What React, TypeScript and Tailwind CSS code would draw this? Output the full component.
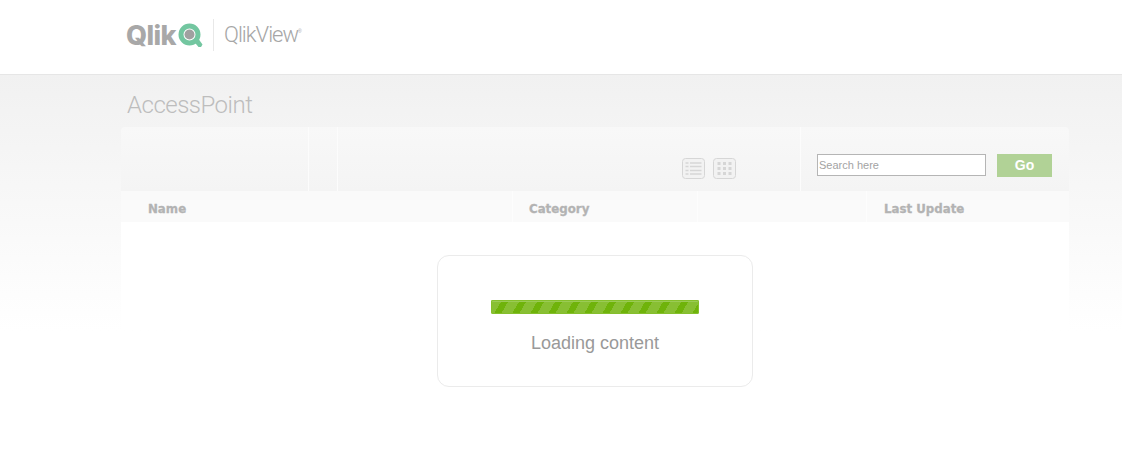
import React from "react";

const QlikMark = () => (
  <svg width="26" height="26" viewBox="0 0 26 26" className="ml-[2px] mt-[2px]">
    <circle cx="11.5" cy="11.5" r="8.5" fill="none" stroke="#73c6a0" strokeWidth="5" />
    <circle cx="11.5" cy="11.5" r="5" fill="#a0a0a0" />
    <path d="M15.5 18l4-3.5 5 7-1.5 2.5h-2.5z" fill="#73c6a0" />
  </svg>
);

const ListIcon = () => (
  <svg width="23" height="21" viewBox="0 0 23 21" fill="none">
    <rect x="0.5" y="0.5" width="22" height="20" rx="3" fill="#f2f2f2" stroke="#d6d6d6" />
    <path
      d="M3.5 5h3M8 5h11.5M3.5 8.5h3M8 8.5h11.5M3.5 12.5h3M8 12.5h11.5M3.5 16h3M8 16h11.5"
      stroke="#d6d6d6"
      strokeWidth="1.4"
    />
  </svg>
);

const GridIcon = () => (
  <svg width="23" height="21" viewBox="0 0 23 21" fill="none">
    <rect x="0.5" y="0.5" width="22" height="20" rx="3" fill="#f2f2f2" stroke="#d6d6d6" />
    <g fill="#d6d6d6">
      <rect x="4.5" y="4" width="3" height="3" />
      <rect x="10" y="4" width="3" height="3" />
      <rect x="15.5" y="4" width="3" height="3" />
      <rect x="4.5" y="9" width="3" height="3" />
      <rect x="10" y="9" width="3" height="3" />
      <rect x="15.5" y="9" width="3" height="3" />
      <rect x="4.5" y="14" width="3" height="3" />
      <rect x="10" y="14" width="3" height="3" />
      <rect x="15.5" y="14" width="3" height="3" />
    </g>
  </svg>
);

const App = () => {
  return (
    <div className="relative h-[465px] overflow-hidden bg-white font-['Liberation_Sans',sans-serif]">
      {/* Header */}
      <header className="flex h-[75px] items-center border-b border-[#e6e6e6] bg-white pb-[4px] pl-[126px]">
        <span className="font-['Inter',sans-serif] text-[27px] font-extrabold leading-none tracking-[-0.6px] text-[#a8a8a8]">
          Qlik
        </span>
        <QlikMark />
        <div className="ml-[9px] mr-[10px] h-[32px] w-px bg-[#e8e8e8]" />
        <span className="font-['Roboto',sans-serif] text-[22px] font-light leading-none tracking-[-1px] text-[#a6a6a6]">
          QlikView
        </span>
        <span className="mb-[8px] text-[5px] leading-none text-[#a6a6a6]">®</span>
      </header>

      {/* Main */}
      <main className="h-[256px] bg-gradient-to-b from-[#f1f1f1] to-white px-[121px]">
        <h1 className="pl-[6px] pt-[16px] font-['Roboto',sans-serif] text-[24px] font-light leading-[28px] tracking-[-0.5px] text-[#bdbdbd]">
          AccessPoint
        </h1>

        <div className="mt-[8px] w-[948px] overflow-hidden rounded-t-[4px]">
          {/* Toolbar */}
          <div className="flex h-[64px] bg-gradient-to-b from-[#f8f8f8] to-[#f4f4f4]">
            <div className="w-[188px] border-r border-[#fcfcfc]" />
            <div className="w-[29px] border-r border-[#fcfcfc]" />
            <div className="flex w-[463px] items-start justify-end gap-[8px] border-r border-[#fcfcfc] pr-[64px] pt-[31px]">
              <ListIcon />
              <GridIcon />
            </div>
            <div className="flex flex-1 items-start gap-[11px] pl-[16px] pt-[27px]">
              <div className="flex h-[22px] w-[169px] items-center border border-[#b5b5b5] bg-white pl-px text-[11px] text-[#a3a3a3]">
                Search here
              </div>
              <button className="h-[23px] w-[55px] bg-[#b1d296] text-[14px] font-bold text-white">
                Go
              </button>
            </div>
          </div>

          {/* Column headings */}
          <div className="flex h-[31px] bg-[#fafafa] font-['DejaVu_Sans',sans-serif] text-[11.8px] font-bold text-[#b3b3b3] [-webkit-text-stroke:0.3px_#b3b3b3]">
            <div className="w-[392px] border-r border-[#fdfdfd] pl-[27px] pt-[11px] leading-[15px]">Name</div>
            <div className="w-[185px] border-r border-[#fdfdfd] pl-[16px] pt-[11px] leading-[15px]">Category</div>
            <div className="w-[169px] border-r border-[#fdfdfd]" />
            <div className="flex-1 pl-[17px] pt-[11px] leading-[15px]">Last Update</div>
          </div>

          <div className="h-[108px] bg-white" />
        </div>
      </main>

      {/* Loading box */}
      <div className="absolute left-[437px] top-[255px] flex h-[132px] w-[316px] flex-col items-center rounded-[12px] border border-[#ebebeb] bg-white pt-[44px]">
        <div className="h-[14px] w-[208px] rounded-[2px] bg-[repeating-linear-gradient(120deg,#88bf33_0px,#88bf33_9.5px,#6fb30a_9.5px,#6fb30a_15.6px)] shadow-[inset_0_0_0_1px_#85bf2c,inset_0_2px_0_#9bcb55]" />
        <p className="mt-[17px] text-[18px] leading-[24px] text-[#999999]">Loading content</p>
      </div>
    </div>
  );
};

export default App;
